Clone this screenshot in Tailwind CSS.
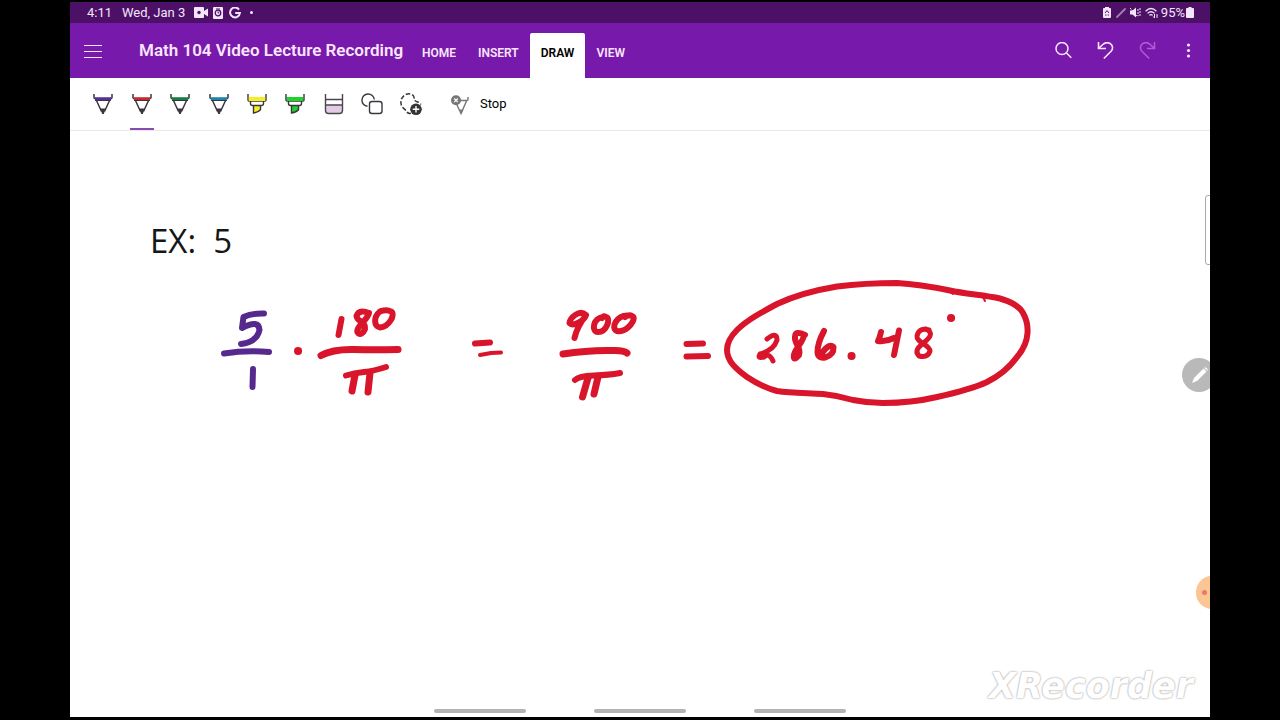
<!DOCTYPE html>
<html lang="en">
<head>
<meta charset="utf-8">
<meta name="viewport" content="width=device-width, initial-scale=1">
<title>Math 104 Video Lecture Recording</title>
<script src="https://cdn.jsdelivr.net/npm/@tailwindcss/browser@4"></script>
</head>
<body class="flex min-h-screen flex-col bg-black px-[70px] pt-[2px] pb-[3px] font-['Roboto',sans-serif]">
<div class="relative flex grow flex-col overflow-hidden bg-white">

  <!-- Status bar -->
  <div class="flex h-[21px] items-center justify-between bg-[#4c1167] pr-4 pl-[17px] text-[13px] text-[#f3e6fa]">
    <div class="flex items-center">
      <span class="w-[35px]">4:11</span>
      <span class="w-[72px]">Wed, Jan 3</span>
      <svg class="mr-[5px] h-[11px] w-[14px]" viewBox="0 0 14 11"><path fill="currentColor" d="M1 0h8q1 0 1 1v3l4-2.500v8L10 7v3q0 1-1 1H1q-1 0-1-1V1q0-1 1-1z"/><circle cx="5" cy="5.500" r="1.700" fill="#4c1167"/></svg>
      <svg class="mr-[6px] h-[12px] w-[10px]" viewBox="0 0 10 12"><rect width="10" height="12" rx="1" fill="currentColor"/><circle cx="5" cy="6" r="2.800" fill="none" stroke="#4c1167" stroke-width="1.300"/><path d="M5 4.500V6h1.300M3 2h4" fill="none" stroke="#4c1167"/></svg>
      <svg class="mr-[9px] size-[12px]" viewBox="0 0 12 12"><path d="M10 2.600A4.900 4.900 0 1 0 10.900 6H6.200" fill="none" stroke="currentColor" stroke-width="2"/></svg>
      <span class="size-[3px] rounded-full bg-current"></span>
    </div>
    <div class="flex items-center">
      <svg class="mr-[5px] h-[11px] w-[8px]" viewBox="0 0 8 11"><path fill="currentColor" d="M2 0h4v1h1q1 0 1 1v8q0 1-1 1H1q-1 0-1-1V2q0-1 1-1h1z"/><path d="M2 6l2-2.500L6 6M2 8h1.500M4.700 8H6" fill="none" stroke="#4c1167"/></svg>
      <svg class="mr-[4px] size-[10px] opacity-50" viewBox="0 0 10 10"><path d="M1 9 9 1" stroke="currentColor" stroke-width="1.800" stroke-linecap="round"/></svg>
      <svg class="mr-[4px] h-[11px] w-[11px]" viewBox="0 0 11 11"><path fill="currentColor" d="M0 3.500h2.500L6 .5v10L2.500 7.500H0z"/><path d="M0 1l8 9M8 2v7M10 1v9" stroke="currentColor" stroke-dasharray="2 1" fill="none"/></svg>
      <svg class="mr-[3px] h-[12px] w-[13px]" viewBox="0 0 13 12"><path d="M.6 4.200q5.400-5.400 10.800 0M2.500 6.400q3.500-3.400 7 0M4.400 8.400q1.600-1.600 3.200 0" fill="none" stroke="currentColor" stroke-width="1.300"/><path d="M9.500 11V7M8.300 9.500 9.500 11M12 7.500V11M12 7.500l1 1" fill="none" stroke="currentColor"/></svg>
      <span>95%</span>
      <svg class="ml-[1px] h-[11px] w-[8px]" viewBox="0 0 8 11"><path fill="currentColor" d="M2.500 0h3v1H7q1 0 1 1v8q0 1-1 1H1q-1 0-1-1V2q0-1 1-1h1.500z"/></svg>
    </div>
  </div>

  <!-- App bar -->
  <header class="flex h-[55px] items-center bg-[#7719aa] pl-[14px] text-[#fbe6ff]">
    <button aria-label="Menu" class="size-[18px]"><svg class="size-[18px]" viewBox="0 0 18 18"><path d="M0 3.500h18M0 9.500h18M0 15.500h18" stroke="currentColor" stroke-width="1.200"/></svg></button>
    <h1 class="ml-[37px] w-[272px] text-[17px] font-semibold whitespace-nowrap">Math 104 Video Lecture Recording</h1>
    <nav class="flex h-full items-end text-[12px] font-semibold">
      <button class="h-[45px] px-[11px] pb-[5px]">HOME</button>
      <button class="h-[45px] px-[11px] pb-[5px]">INSERT</button>
      <button class="h-[45px] rounded-t-[2px] bg-white px-[11px] pb-[5px] text-black">DRAW</button>
      <button class="h-[45px] px-[11px] pb-[5px]">VIEW</button>
    </nav>
    <div class="mr-[12px] ml-auto flex items-center gap-6">
      <button aria-label="Search" class="size-[18px]"><svg class="size-[18px]" viewBox="0 0 18 18" fill="none" stroke="currentColor" stroke-width="1.500"><circle cx="8" cy="6.500" r="6"/><path d="m12.300 10.800 5 5"/></svg></button>
      <button aria-label="Undo" class="size-[18px]"><svg class="size-[18px]" viewBox="0 0 18 18" fill="none" stroke="currentColor" stroke-width="1.600"><path d="M2.500 0v6.500H10M2.500 6.500l4.300-4C12-2.200 19.500 3.500 15.300 9L7.800 16.500"/></svg></button>
      <button aria-label="Redo" disabled class="size-[18px] text-[#b05ad5]"><svg class="size-[18px]" viewBox="0 0 18 18" fill="none" stroke="currentColor" stroke-width="1.600"><path d="M16.500 0v6.500H9M16.500 6.500l-4.300-4C7-2.200-.5 3.500 3.700 9l7.500 7.500"/></svg></button>
      <button aria-label="More options" class="size-[18px]"><svg class="size-[18px]" viewBox="0 0 18 18" fill="currentColor"><circle cx="8.500" cy="3" r="1.600"/><circle cx="8.500" cy="8.500" r="1.600"/><circle cx="8.500" cy="14" r="1.600"/></svg></button>
    </div>
  </header>

  <!-- Drawing tools -->
  <svg class="hidden">
    <symbol id="pen" viewBox="0 0 24 24"><path d="M3 2v3.500q0 1 1 1h16q1 0 1-1V2M5 7.500l5.500 12M19 7.500l-5.500 12M4 8.300h16" fill="none" stroke="#3b353d" stroke-width="1.500"/><path d="M3.800 5.300h16.400v2.700h-16.400z" fill="currentColor"/><path d="M9.300 16.500h5.400L12.800 22h-1.600z" fill="#3b353d"/></symbol>
    <symbol id="marker" viewBox="0 0 24 24"><path d="M3.500 5h17v4h-17zM8 14h8v3.500L8.500 21z" fill="currentColor"/><path d="M3 2v6q0 1 1 1h16q1 0 1-1V2M5.500 9v2.500q0 2 2 2h9q2 0 2-2V9M8.500 14v7q5-.8 7-3.200V14" fill="none" stroke="#3b353d" stroke-width="1.400"/><path d="M3.800 5h16.400v4h-16.400z" fill="currentColor"/></symbol>
  </svg>
  <div class="flex h-[53px] items-stretch border-b border-[#e8e8e8] bg-white pl-[14px]">
    <div class="grid w-[346px] grid-cols-9 justify-items-center">
      <button aria-label="Purple pen" class="w-6 text-[#56309a]"><svg class="size-6"><use href="#pen"/></svg></button>
      <button aria-label="Red pen" aria-pressed="true" class="w-6 border-y-2 border-t-transparent border-b-[#8a4bb0] text-[#c52a2e]"><svg class="size-6"><use href="#pen"/></svg></button>
      <button aria-label="Green pen" class="w-6 text-[#15803f]"><svg class="size-6"><use href="#pen"/></svg></button>
      <button aria-label="Blue pen" class="w-6 text-[#1889ac]"><svg class="size-6"><use href="#pen"/></svg></button>
      <button aria-label="Yellow highlighter" class="w-6 text-[#f6ee22]"><svg class="size-6"><use href="#marker"/></svg></button>
      <button aria-label="Green highlighter" class="w-6 text-[#1fd32c]"><svg class="size-6"><use href="#marker"/></svg></button>
      <button aria-label="Eraser" class="w-6"><svg class="size-6" viewBox="0 0 24 24"><path d="M3.500 13h17v5.500q0 3-3 3h-11q-3 0-3-3z" fill="#e3cbe5"/><path d="M3.500 2v16.500q0 3 3 3h11q3 0 3-3V2M3.500 7.500h17M3.500 13h17" fill="none" stroke="#4b454d" stroke-width="1.400"/></svg></button>
      <button aria-label="Shapes" class="w-6"><svg class="size-6" viewBox="0 0 24 24" fill="none" stroke="#3b353d" stroke-width="1.400"><path d="M7.500 14.300A6.200 6.200 0 1 1 14.300 7.500"/><rect x="9.500" y="9.500" width="12.500" height="12" rx="2.500"/></svg></button>
      <button aria-label="Lasso select" class="w-6"><svg class="size-6" viewBox="0 0 24 24" fill="none"><path d="M12 21.300C9 22 7.500 20 6 17.500 2 15 1 11 2.500 7 5 1 12 .5 14.500 4c1.500 3 0 4.500 3 5.500q3.500 1 4.500 3" stroke="#3b353d" stroke-width="1.500" stroke-dasharray="4.500 2"/><circle cx="17" cy="17.300" r="5.800" fill="#333"/><path d="M17 14v6.600M13.700 17.300h6.600" stroke="#fff" stroke-width="1.400"/></svg></button>
    </div>
    <button class="ml-[18px] flex items-center gap-[8px] text-[13px] text-black">
      <svg class="size-6" viewBox="0 0 24 24" fill="none"><path d="M12 8.500h7q1 0 1-1V5M8.500 12l4.500 9.500L18.500 9" stroke="#777" stroke-width="1.400"/><path d="M11.500 17.500h4L13.500 22z" fill="#777"/><circle cx="8" cy="8.300" r="5" fill="#777"/><path d="m6.200 6.500 3.600 3.600m0-3.600-3.600 3.600" stroke="#fff" stroke-width="1.300"/></svg>
      <span>Stop</span>
    </button>
  </div>

  <!-- Note page -->
  <main class="relative flex grow flex-col overflow-hidden">
    <p class="mt-[86px] ml-[80px] font-['Open_Sans',sans-serif] text-[33px] leading-[48px] font-medium whitespace-pre text-[#161616]">EX:  5</p>

    <!-- Ink strokes -->
    <svg role="img" aria-label="5/1 · 180/π = 900/π = 286.48°" class="absolute inset-0 size-full">
      <g transform="translate(-70 -131)" fill="none" stroke-width="6" stroke-linecap="round" stroke-linejoin="round">
        <g stroke="#56298f">
          <path d="M264 313.500Q252 313 243.500 317L242 328Q259 319 259.500 330Q257 342 241 344"/>
          <path d="M224 353.500Q246 350 269 352M253 369L252.500 387"/>
        </g>
        <g stroke="#d9152c">
          <path stroke-width="8" d="M298 351h.1"/>
          <path stroke-width="6" d="M341.500 319L338.500 335M369 313Q359 309 356.500 316C357 322 366 321 365 329Q362 336 358 333C354 328 367 321 369 313"/>
          <path stroke-width="6" d="M380 311.500C373 317 374 327 380 327.500C389 327 396 314 391 311.500Q387 309 380 311.500"/>
          <path stroke-width="7" d="M321 355.500Q333 349 354 349.500T398 349.500"/>
          <path stroke-width="6" d="M346 375.500Q354 373 364 372T386 367"/>
          <path stroke-width="7" d="M355 375L352 391M370 373L368 392"/>
          <path stroke-width="6" d="M475 343.500L490 342.500"/><path d="M480 355L491 353L501 352.500" stroke-width="4"/>
          <path stroke-width="6" d="M586 315C579 309 570 318 569.500 323C573 327 584 321 586 315Q577 327 574.500 338M603 317C593 318 591 332 598 332C607 332 611 318 606 317Q604 315 602 318M628 315.500C617 315 610 328 617 331C627 333 638 318 632 316Q629 314 625 317"/>
          <path stroke-width="7" d="M563 354Q588 350 612 350.500Q624 350 627 353"/>
          <path stroke-width="6" d="M575 380Q579 376 594 375.500T620 373"/>
          <path stroke-width="7" d="M588 378L582.500 397M598 377L594 394"/>
          <path stroke-width="6" d="M686.500 344L703 343.500M686.500 356.500L708 356"/>
          <path stroke-width="6" d="M727 350C727 344 730 337 737 330C747 320 762 312 777 304C796 295 816 290 837 286.500C857 284 877 283 897 283C916 284 933 287 950 290.500C966 294 984 295 1000 298.500C1012 302 1020 307 1023 313C1027 320 1028 326 1027.500 333C1027 342 1023 350 1017 357C1009 368 999 376 987 382C972 389 955 393 937 397C920 401 902 403 883 403C872 403 863 402 853 400C843 397 833 395 823 394C808 393 791 393 777 391C765 388 756 383 747 377C736 369 727 361 727 350"/>
          <path stroke-width="2" d="M949 291l4 3M983 297l2 4"/>
          <path stroke-width="5" d="M767 339Q777 331 777 340Q774 350 760 354Q757 359 764 357Q769 352 773 361"/>
          <path stroke-width="3" d="M759 356l8-2"/>
          <path stroke-width="6" d="M805 335Q795 330 795 337C794 344 802 348 799 355Q793 362 794 355C794 350 804 341 804 335"/>
          <path stroke-width="6" d="M824 331Q817.500 343 817.500 352Q818 359 825 357.500Q834 355 833.500 347Q829 343 822 353"/>
          <path stroke-width="8" d="M851.500 356h.1M951 318h.1"/>
          <path stroke-width="6" d="M881 332Q880 337 878 341Q886 342 894 338M899 330.500L894 355"/>
          <path stroke-width="5" d="M929 330Q919 327 917 336C916 342 930 345 930 351Q928 358 919 356C911 348 928 342 930 336Q932 332 926 329"/>
        </g>
      </g>
    </svg>

    <div class="absolute top-[64px] -right-[6px] h-[70px] w-[11px] rounded-[3px] border border-[#aaa] bg-white"></div>
    <button aria-label="Pen toolbar" class="absolute top-[227px] -right-[6px] flex size-[34px] items-center justify-center rounded-full bg-[#b9b9b9]">
      <svg class="size-[18px]" viewBox="0 0 18 18"><path d="M2 17l2-5L13.500 2.500l3 3L7 15zM14.200 1.800q1-1 2 0l1 1q1 1 0 2z" fill="#fff"/></svg>
    </button>
    <button aria-label="Recorder" class="absolute top-[445px] -right-[18px] h-[33px] w-8 rounded-full bg-[#fbc594]"><span class="absolute top-[14px] left-[6px] size-[5px] rounded-full bg-[#f07860]"></span></button>

    <div class="mt-auto mr-[17px] self-end font-['DejaVu_Sans',sans-serif] text-[35px] leading-[44px] font-bold text-white italic [text-shadow:0_0_2px_#aaa,0_0_2px_#bbb]">XRecorder</div>
    <div class="flex justify-center gap-[68px] pt-[1px] pb-[4px]">
      <span class="h-[4px] w-[92px] rounded-full bg-[#b3b3b3]"></span>
      <span class="h-[4px] w-[92px] rounded-full bg-[#b3b3b3]"></span>
      <span class="h-[4px] w-[92px] rounded-full bg-[#b3b3b3]"></span>
    </div>
  </main>
</div>
</body>
</html>
